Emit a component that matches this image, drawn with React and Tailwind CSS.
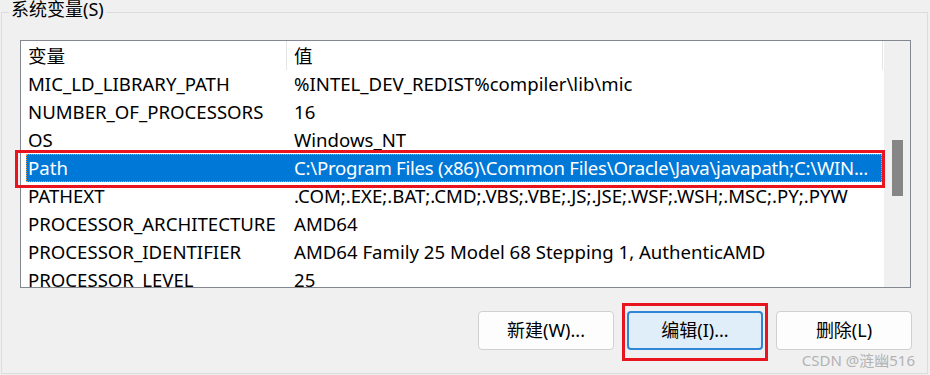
import React from 'react';

const rows = [
  ['MIC_LD_LIBRARY_PATH', '%INTEL_DEV_REDIST%compiler\\lib\\mic'],
  ['NUMBER_OF_PROCESSORS', '16'],
  ['OS', 'Windows_NT'],
  ['Path', 'C:\\Program Files (x86)\\Common Files\\Oracle\\Java\\javapath;C:\\WIN...'],
  ['PATHEXT', '.COM;.EXE;.BAT;.CMD;.VBS;.VBE;.JS;.JSE;.WSF;.WSH;.MSC;.PY;.PYW'],
  ['PROCESSOR_ARCHITECTURE', 'AMD64'],
  ['PROCESSOR_IDENTIFIER', 'AMD64 Family 25 Model 68 Stepping 1, AuthenticAMD'],
  ['PROCESSOR_LEVEL', '25'],
];

const font = { fontFamily: '"Noto Sans", "Noto Sans CJK SC", sans-serif' };

function Row({ name, value, selected }) {
  return (
    <div
      className={
        'flex h-[28px] items-center whitespace-nowrap ' +
        (selected
          ? 'ml-[5px] w-[856px] bg-[#0078d7] text-white outline outline-1 outline-dotted outline-offset-[-1px] outline-[#e8a050]'
          : '')
      }
    >
      <div className={selected ? 'w-[261px] pl-[2px]' : 'w-[266px] pl-[7px]'}>{name}</div>
      <div className={'overflow-hidden pl-[7px] ' + (selected ? 'tracking-[-0.25px]' : '')}>{value}</div>
    </div>
  );
}

function Button({ children, focused }) {
  return (
    <div
      className={
        'flex h-[39px] w-[136px] items-center justify-center rounded-[4px] text-[18px] ' +
        (focused
          ? 'border-2 border-[#2f86d6] bg-[#e0eef9]'
          : 'border border-[#d0d0d0] bg-[#fdfdfd]')
      }
    >
      {children}
    </div>
  );
}

export default function App() {
  return (
    <div className="relative h-[375px] w-[930px] overflow-hidden bg-[#f0f0f0] text-black" style={font}>
      {/* group box */}
      <div className="relative ml-[1px] mt-[12px] h-[362px] w-[927px] border border-[#dcdcdc]">
        <div className="absolute left-[7px] top-[-16px] bg-[#f0f0f0] px-[2px] text-[18px] leading-[24px]">
          系统变量(S)
        </div>

        {/* list view */}
        <div className="ml-[18px] mt-[27px] flex h-[248px] w-[891px] border border-[#828790] bg-white text-[18.6px]">
          <div className="relative w-[863px] overflow-hidden">
            <div className="flex h-[29px] items-center">
              <div className="flex h-full w-[266px] items-center border-r border-[#e5e5e5] pl-[7px]">变量</div>
              <div className="flex h-full w-[596px] items-center border-r border-[#e5e5e5] pl-[7px]">值</div>
            </div>
            {rows.map(([n, v]) => (
              <Row key={n} name={n} value={v} selected={n === 'Path'} />
            ))}
          </div>
          {/* scrollbar */}
          <div className="flex w-[26px] flex-col items-center bg-[#f0f0f0] pt-[99px]">
            <div className="h-[56px] w-[11px] bg-[#868686]" />
          </div>
        </div>

        {/* buttons */}
        <div className="ml-[476px] mt-[23px] flex gap-[13px]">
          <Button>新建(W)...</Button>
          <Button focused>编辑(I)...</Button>
          <Button>删除(L)</Button>
        </div>
      </div>

      {/* red annotation boxes */}
      <div className="pointer-events-none absolute left-[15px] top-[150px] h-[38px] w-[870px] border-[3px] border-[#e8151f]" />
      <div className="pointer-events-none absolute left-[622px] top-[303px] h-[58px] w-[146px] border-[3px] border-[#e8151f]" />

      <div className="absolute right-[15px] top-[349px] text-[15px] text-[#b3b3b3]">CSDN @涟幽516</div>
    </div>
  );
}
